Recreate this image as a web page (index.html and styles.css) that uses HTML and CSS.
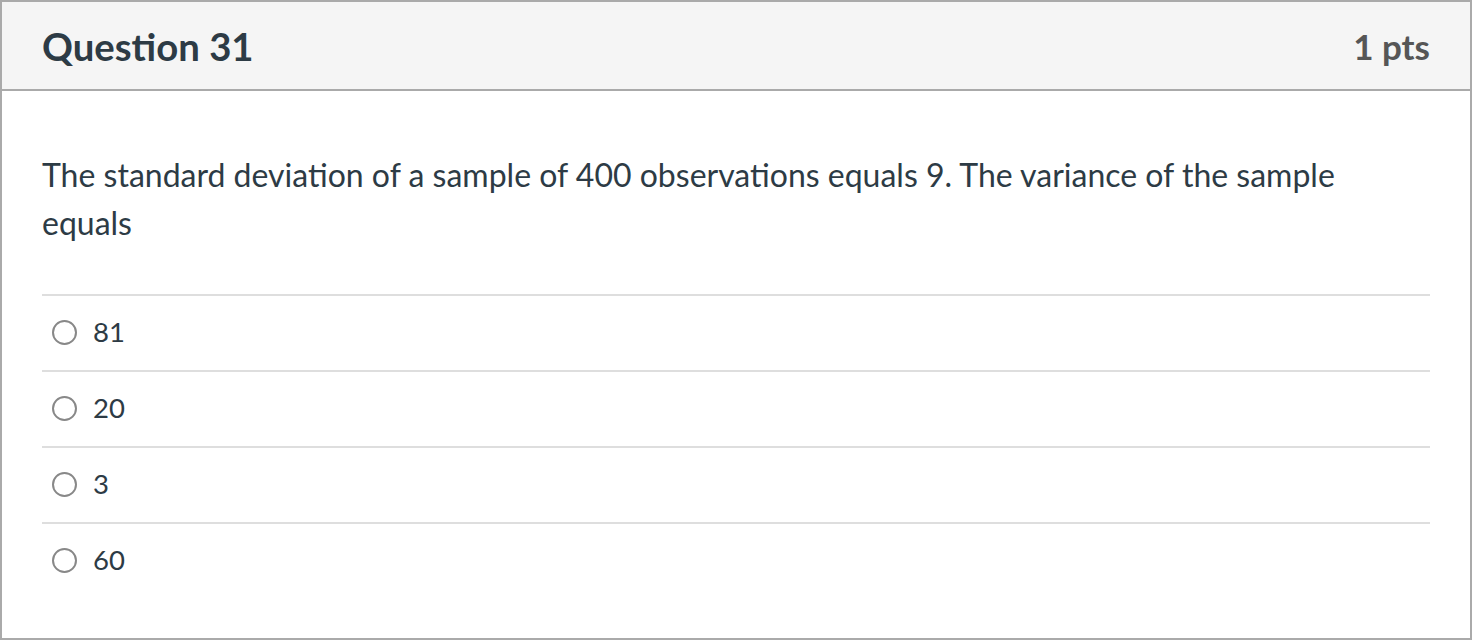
FILE: index.html
```html
<!DOCTYPE html>
<html>
<head>
<meta charset="utf-8">
<link rel="stylesheet" href="styles.css">
</head>
<body>
<div class="question">
  <div class="header">
    <h2 class="title">Question 31</h2>
    <div class="pts">1 pts</div>
  </div>
  <div class="content">
    <p class="text">The standard deviation of a sample of 400 observations equals 9. The variance of the sample equals</p>
    <div class="answers">
      <label class="answer"><span class="radio"></span><span class="label">81</span></label>
      <label class="answer"><span class="radio"></span><span class="label">20</span></label>
      <label class="answer"><span class="radio"></span><span class="label">3</span></label>
      <label class="answer"><span class="radio"></span><span class="label">60</span></label>
    </div>
  </div>
</div>
</body>
</html>
```

FILE: styles.css
```css
html, body {
  margin: 0;
  padding: 0;
  background: #fff;
}
body {
  font-family: Lato, "Open Sans", sans-serif;
  color: #2d3b45;
}
.question {
  width: 1472px;
  height: 640px;
  box-sizing: border-box;
  border: 2px solid #aaaaaa;
  background: #fff;
}
.header {
  height: 87px;
  background: #f5f5f5;
  border-bottom: 2px solid #aaaaaa;
  display: flex;
  align-items: center;
  justify-content: space-between;
  padding: 0 40px;
}
.title {
  margin: 0;
  font-size: 38.3px;
  font-weight: 700;
  color: #2d3b45;
}
.pts {
  font-size: 35px;
  font-weight: 700;
  color: #565656;
}
.content {
  padding: 0 40px;
}
.text {
  margin: 0;
  padding-top: 60px;
  padding-bottom: 47px;
  font-size: 32px;
  line-height: 48px;
}
.answers {
  display: flex;
  flex-direction: column;
}
.answer {
  display: flex;
  align-items: center;
  height: 71px;
  padding-bottom: 3px;
  border-top: 2px solid #dedede;
}
.radio {
  width: 21px;
  height: 21px;
  border: 2px solid #888;
  border-radius: 50%;
  margin-left: 10px;
  margin-right: 16px;
  margin-top: 1px;
  box-sizing: content-box;
}
.label {
  font-size: 27.5px;
}
```
